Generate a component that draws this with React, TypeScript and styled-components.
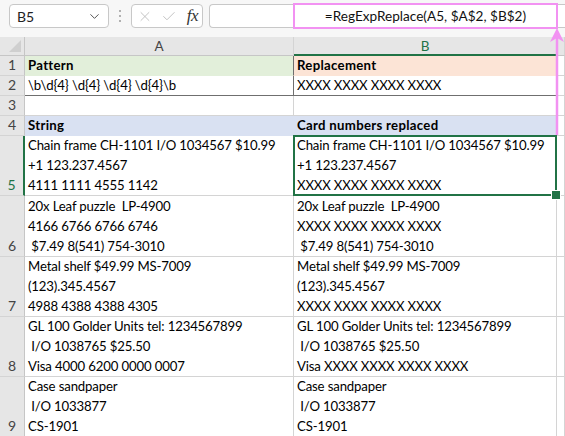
import React from "react";
import styled, { createGlobalStyle } from "styled-components";
import { ChevronDown, X, Check } from "lucide-react";

const Global = createGlobalStyle`
  html, body { margin: 0; padding: 0; background: #ffffff; }
  body { font-family: Lato, "Noto Sans", sans-serif; color: #000; }
  * { box-sizing: border-box; }
`;

const PINK = "#f292f2";
const GREEN = "#217346";
const GRID = "#d4d4d4";
const DARK = "#6f6f6f";

const Root = styled.div`
  position: relative;
  width: 565px;
  height: 436px;
  overflow: hidden;
  background: #fff;
`;

const Toolbar = styled.div`
  height: 37px;
  background: #f7f7f7;
  display: flex;
  align-items: flex-start;
  padding: 4px 0 0 9px;
`;

const Box = styled.div<{ $w?: number }>`
  height: 24px;
  width: ${(p) => (p.$w ? `${p.$w}px` : "auto")};
  background: #fff;
  border: 1px solid #c8c8c8;
  border-radius: 4px;
  display: flex;
  align-items: center;
  flex-shrink: 0;
`;

const NameBox = styled(Box)`
  justify-content: space-between;
  padding: 0 6px 0 7px;
  font-size: 14px;
  color: #222;
`;

const Dots = styled.div`
  width: 22px;
  height: 24px;
  display: flex;
  flex-direction: column;
  align-items: center;
  justify-content: center;
  gap: 3px;
  span {
    width: 2px;
    height: 2px;
    background: #9a9a9a;
    border-radius: 1px;
  }
`;

const FxBox = styled(Box)`
  padding: 0 4px 0 5px;
  gap: 8px;
  color: #b9b9b9;
`;

const Fx = styled.span`
  font-family: "Liberation Serif", "DejaVu Serif", serif;
  font-style: italic;
  font-size: 17px;
  color: #333;
  margin-left: 2px;
  letter-spacing: -0.5px;
`;

const FormulaBar = styled(Box)`
  flex: 1;
  margin-left: 6px;
  border-right: none;
  border-radius: 4px 0 0 4px;
  padding-left: 83px;
  align-items: flex-start;
`;

const Formula = styled.div`
  width: 265px;
  height: 26px;
  margin-top: -2px;
  border: 2px solid ${PINK};
  display: flex;
  align-items: center;
  justify-content: center;
  font-size: 13.6px;
  color: #111;
`;

const Sheet = styled.div`
  display: grid;
  grid-template-columns: 25px 269px 263px 1fr;
  grid-template-rows: 19px repeat(4, 20px) 60px 61px 60px 60px 60px;
`;

const Corner = styled.div`
  background: #e6e6e6;
  border-right: 1px solid #c6c6c6;
  border-bottom: 1px solid #c6c6c6;
  position: relative;
  &::after {
    content: "";
    position: absolute;
    right: 3px;
    bottom: 3px;
    border-style: solid;
    border-width: 0 0 12px 12px;
    border-color: transparent transparent #cfcfcf transparent;
  }
`;

const ColHeader = styled.div<{ $sel?: boolean }>`
  background: #e6e6e6;
  border-right: 1px solid ${GRID};
  border-bottom: ${(p) => (p.$sel ? `2px solid ${GREEN}` : "1px solid #c6c6c6")};
  color: ${(p) => (p.$sel ? GREEN : "#444")};
  font-size: 13.5px;
  display: flex;
  align-items: center;
  justify-content: center;
  padding-top: ${(p) => (p.$sel ? "1px" : "0")};
`;

const RowHeader = styled.div<{ $sel?: boolean }>`
  background: #e6e6e6;
  border-bottom: 1px solid ${GRID};
  border-right: ${(p) => (p.$sel ? `2px solid ${GREEN}` : "1px solid #c6c6c6")};
  color: ${(p) => (p.$sel ? GREEN : "#444")};
  font-size: 14px;
  line-height: 20px;
  display: flex;
  align-items: flex-end;
  justify-content: center;
`;

type Edge = { top?: boolean; left?: boolean; right?: boolean; bottom?: boolean };

const Cell = styled.div<{ $bg?: string; $bold?: boolean; $dark?: Edge }>`
  position: relative;
  background: ${(p) => p.$bg || "#fff"};
  border-right: 1px solid ${(p) => (p.$dark?.right ? DARK : p.$bg || GRID)};
  border-bottom: 1px solid ${(p) => (p.$dark?.bottom ? DARK : p.$bg || GRID)};
  border-left: ${(p) => (p.$dark?.left ? `1px solid ${DARK}` : "none")};
  margin-left: ${(p) => (p.$dark?.left ? "-1px" : "0")};
  padding: 0 3px;
  font-size: 13.2px;
  letter-spacing: ${(p) => (p.$bold ? "0.3px" : "-0.15px")};
  font-weight: ${(p) => (p.$bold ? 700 : 400)};
  line-height: 20px;
  white-space: pre;
  overflow: hidden;
  display: flex;
  flex-direction: column;
  justify-content: flex-end;
`;

const SelectedCell = styled(Cell)`
  overflow: visible;
  &::after {
    content: "";
    position: absolute;
    left: -1px;
    top: -1px;
    right: -1px;
    bottom: -1px;
    border: 2px solid ${GREEN};
    pointer-events: none;
  }
  &::before {
    content: "";
    position: absolute;
    right: -5px;
    bottom: -5px;
    width: 8px;
    height: 8px;
    background: ${GREEN};
    border: 1px solid #fff;
    z-index: 2;
  }
`;

const Arrow = styled.svg`
  position: absolute;
  left: 549px;
  top: 27px;
  overflow: visible;
`;

const rows: [string, string][] = [
  [
    "Chain frame CH-1101 I/O 1034567 $10.99\n+1 123.237.4567\n4111 1111 4555 1142",
    "Chain frame CH-1101 I/O 1034567 $10.99\n+1 123.237.4567\nXXXX XXXX XXXX XXXX",
  ],
  [
    "20x Leaf puzzle  LP-4900\n4166 6766 6766 6746\n $7.49 8(541) 754-3010",
    "20x Leaf puzzle  LP-4900\nXXXX XXXX XXXX XXXX\n $7.49 8(541) 754-3010",
  ],
  [
    "Metal shelf $49.99 MS-7009\n(123).345.4567\n4988 4388 4388 4305",
    "Metal shelf $49.99 MS-7009\n(123).345.4567\nXXXX XXXX XXXX XXXX",
  ],
  [
    "GL 100 Golder Units tel: 1234567899\n I/O 1038765 $25.50\nVisa 4000 6200 0000 0007",
    "GL 100 Golder Units tel: 1234567899\n I/O 1038765 $25.50\nVisa XXXX XXXX XXXX XXXX",
  ],
  [
    "Case sandpaper\n I/O 1033877\nCS-1901",
    "Case sandpaper\n I/O 1033877\nCS-1901",
  ],
];

const Lines: React.FC<{ text: string }> = ({ text }) => (
  <>
    {text.split("\n").map((l, i) => (
      <div key={i}>{l}</div>
    ))}
  </>
);

export default function App() {
  return (
    <Root>
      <Global />
      <Toolbar>
        <NameBox $w={100}>
          <span>B5</span>
          <ChevronDown size={15} color="#555" strokeWidth={1.6} />
        </NameBox>
        <Dots>
          <span />
          <span />
          <span />
        </Dots>
        <FxBox $w={72}>
          <X size={17} strokeWidth={1.3} />
          <Check size={17} strokeWidth={1.3} />
          <Fx>fx</Fx>
        </FxBox>
        <FormulaBar>
          <Formula>=RegExpReplace(A5, $A$2, $B$2)</Formula>
        </FormulaBar>
      </Toolbar>
      <Sheet>
        <Corner />
        <ColHeader>A</ColHeader>
        <ColHeader $sel>B</ColHeader>
        <ColHeader />

        <RowHeader>1</RowHeader>
        <Cell $bg="#E2EFDA" $bold>Pattern</Cell>
        <Cell $bg="#FCE4D6" $bold $dark={{ left: true, right: true }}>Replacement</Cell>
        <Cell />

        <RowHeader>2</RowHeader>
        <Cell $dark={{ bottom: true }}>{"\\b\\d{4} \\d{4} \\d{4} \\d{4}\\b"}</Cell>
        <Cell $dark={{ left: true, right: true, bottom: true }}>XXXX XXXX XXXX XXXX</Cell>
        <Cell />

        <RowHeader>3</RowHeader>
        <Cell />
        <Cell />
        <Cell />

        <RowHeader>4</RowHeader>
        <Cell $bg="#D9E1F2" $bold>String</Cell>
        <Cell $bg="#D9E1F2" $bold>Card numbers replaced</Cell>
        <Cell />

        {rows.map(([a, b], i) => (
          <React.Fragment key={i}>
            <RowHeader $sel={i === 0}>{i + 5}</RowHeader>
            <Cell>
              <Lines text={a} />
            </Cell>
            {i === 0 ? (
              <SelectedCell>
                <Lines text={b} />
              </SelectedCell>
            ) : (
              <Cell>
                <Lines text={b} />
              </Cell>
            )}
            <Cell />
          </React.Fragment>
        ))}
      </Sheet>
      <Arrow width="16" height="110" viewBox="0 0 16 110">
        <line x1="8" y1="10" x2="8" y2="108" stroke={PINK} strokeWidth="2.5" />
        <path d="M8 1 L15 15 L8 11 L1 15 Z" fill={PINK} />
      </Arrow>
    </Root>
  );
}
